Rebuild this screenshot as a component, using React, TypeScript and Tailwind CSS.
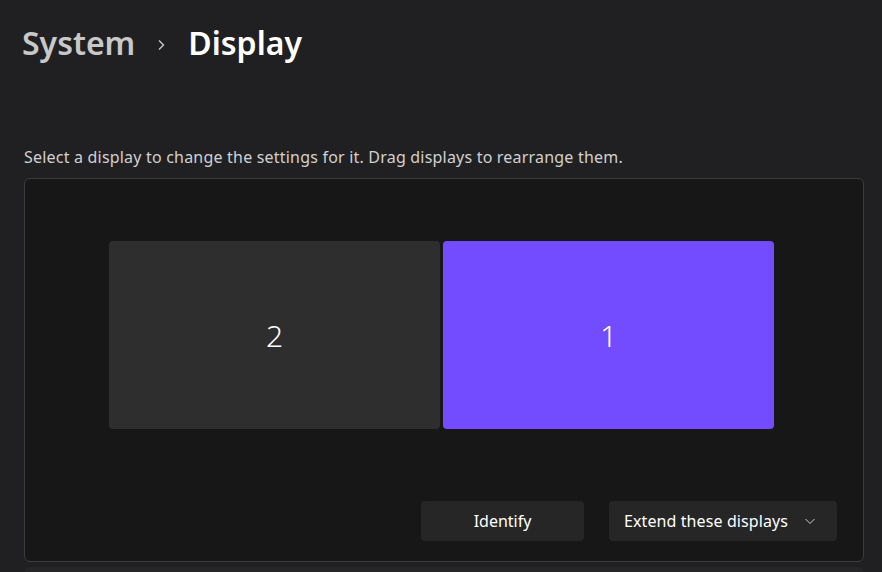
export default function App() {
  return (
    <div
      className="h-[572px] w-[882px] overflow-hidden bg-[#202023] text-white"
      style={{ fontFamily: '"Noto Sans", "Open Sans", sans-serif' }}
    >
      <div className="flex items-center pl-[22px] pt-[20px] h-[46px] box-content">
        <span className="text-[32px] font-semibold text-[#c8c8c8] leading-none">System</span>
        <svg className="ml-[21px] mr-[22px] mt-[4px]" width="10" height="14" viewBox="0 0 10 14">
          <path d="M3 2.5 L7.5 7 L3 11.5" fill="none" stroke="#c8c8c8" strokeWidth="1.4" />
        </svg>
        <span className="text-[32px] font-semibold text-white leading-none">Display</span>
      </div>

      <div className="px-[24px] pt-[80px]">
        <p className="text-[16px] leading-[22px] text-[#d0d0d0] tracking-[0.2px]">
          Select a display to change the settings for it. Drag displays to rearrange them.
        </p>
        <div className="mt-[10px] h-[384px] w-[840px] rounded-[6px] border border-[#3c3c3c] bg-[#171717] flex flex-col">
          <div className="flex gap-[3px] pl-[84px] pt-[62px]">
            <div className="flex h-[188px] w-[331px] items-center justify-center rounded-[4px] bg-[#2e2e2e] text-[30px] font-light">
              2
            </div>
            <div className="flex h-[188px] w-[331px] items-center justify-center rounded-[4px] bg-[#744cff] text-[30px] font-light">
              1
            </div>
          </div>
          <div className="mt-auto mb-[20px] flex justify-end gap-[25px] pr-[26px]">
            <button className="h-[40px] w-[163px] rounded-[4px] bg-[#262626] text-[16px] text-white">
              Identify
            </button>
            <button className="flex h-[40px] w-[228px] items-center rounded-[4px] bg-[#262626] pl-[15px] text-[16px] tracking-[0.1px] text-white">
              Extend these displays
              <svg className="ml-[16px]" width="12" height="12" viewBox="0 0 12 12">
                <path d="M1.5 4 L6 8.5 L10.5 4" fill="none" stroke="#d0d0d0" strokeWidth="1" />
              </svg>
            </button>
          </div>
        </div>
        <div className="mt-[5px] h-[20px] w-[840px] rounded-t-[6px] bg-[#262629]" />
      </div>
    </div>
  );
}
